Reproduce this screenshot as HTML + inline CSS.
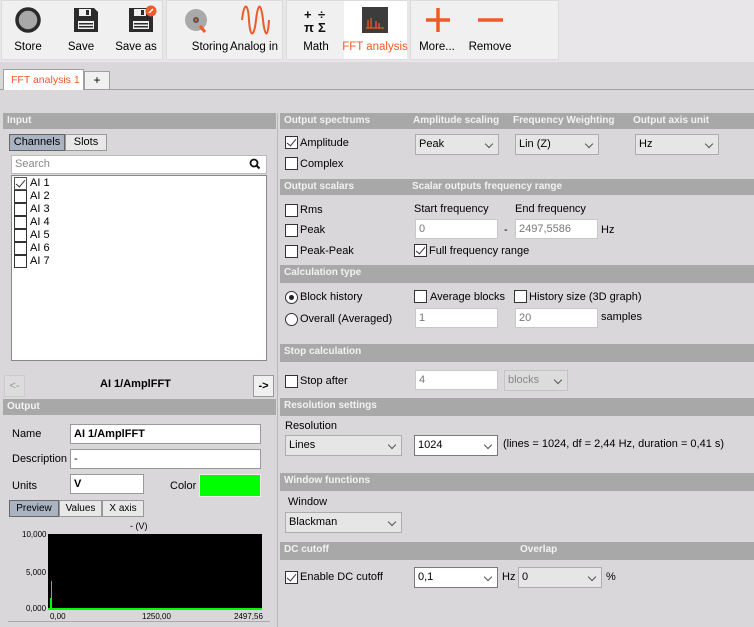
<!DOCTYPE html>
<html><head><meta charset="utf-8"><style>
*{box-sizing:border-box;margin:0;padding:0}
body{width:754px;height:627px;overflow:hidden;background:#d9d7da;font-family:"Liberation Sans",sans-serif;font-size:11px;color:#000;position:relative}
.a{position:absolute}
.grp{position:absolute;top:0;height:60px;background:#f0f0f0;border:1px solid #dcdcdc}
.tb{position:absolute;top:41px;font-size:11.5px;text-align:center;width:70px}
.hd{position:absolute;background:#a8a8a8;color:#f2f2f2;font-weight:bold;font-size:10px;height:16px;line-height:16px;padding-left:4px}
.hd span{position:absolute;top:0}
.cb{position:absolute;width:13px;height:13px;border:1px solid #333;background:#fff}
.cb.c::after{content:"";position:absolute;left:3px;top:0px;width:4px;height:8px;border:solid #333;border-width:0 1.5px 1.5px 0;transform:rotate(40deg)}
.in{position:absolute;background:#fff;border:1px solid #c8c8c8;height:20px;line-height:18px;padding-left:3px;color:#777}
.sel{position:absolute;border:1px solid #adadad;background:#e6e6e6;height:21px;line-height:19px;padding-left:3px}
.sel.w{background:#fff;border-color:#7a7a7a}
.sel::after{content:"";position:absolute;right:6px;top:6px;width:5px;height:5px;border:solid #555;border-width:0 1px 1px 0;transform:rotate(45deg)}
.t{position:absolute;white-space:nowrap}
.rd{position:absolute;width:13px;height:13px;border:1px solid #333;border-radius:50%;background:#fff}
.btn{position:absolute;border:1px solid #999;background:#e8e8e8;height:17px;line-height:15px;text-align:center}
</style></head><body>
<div class="a" style="left:0;top:0;width:754px;height:62px;background:#e8e6e9"></div>
<div class="grp" style="left:1px;width:162px"></div>
<div class="grp" style="left:166px;width:117px"></div>
<div class="grp" style="left:286px;width:121px"></div>
<div class="grp" style="left:410px;width:149px"></div>
<div class="a" style="left:344px;top:1px;width:63px;height:58px;background:#fff"></div>
<svg class="a" style="left:0;top:0" width="560" height="36">
<circle cx="28" cy="20" r="11" fill="#a8a8a8" stroke="#2b2b2b" stroke-width="3.5"/>
<path d="M74 8h20l4 4v20h-24z" fill="#2b2b2b"/><rect x="79" y="9" width="12" height="7" fill="#f0f0f0"/><rect x="86" y="10" width="3" height="5" fill="#2b2b2b"/><rect x="78" y="21" width="16" height="8" fill="#f0f0f0"/><rect x="79" y="23" width="14" height="1.5" fill="#2b2b2b"/><rect x="79" y="26" width="14" height="1.5" fill="#2b2b2b"/>
<g transform="translate(55,0)"><path d="M74 8h20l4 4v20h-24z" fill="#2b2b2b"/><rect x="79" y="9" width="12" height="7" fill="#f0f0f0"/><rect x="86" y="10" width="3" height="5" fill="#2b2b2b"/><rect x="78" y="21" width="16" height="8" fill="#f0f0f0"/><rect x="79" y="23" width="14" height="1.5" fill="#2b2b2b"/><rect x="79" y="26" width="14" height="1.5" fill="#2b2b2b"/><circle cx="96" cy="11" r="5.5" fill="#f05a28"/><path d="M94 13l4-4" stroke="#fff" stroke-width="1.5"/></g>
<circle cx="196" cy="20" r="11" fill="#a9a9a9"/><circle cx="196" cy="20" r="3" fill="#555"/><circle cx="196" cy="20" r="1.2" fill="#f05a28"/><path d="M200 26l5 6" stroke="#f05a28" stroke-width="3"/>
<path d="M242 20c2-18 6-18 7 0s5 18 7 0 5-18 7 0 5 18 6 0" fill="none" stroke="#f05a28" stroke-width="2"/>
<g fill="#111" font-family="Liberation Sans" font-weight="bold" font-size="13"><text x="304" y="19">+</text><text x="318" y="19">÷</text><text x="304" y="32">π</text><text x="318" y="32">Σ</text></g>
<rect x="362" y="7" width="26" height="26" fill="#3c3c3c"/><path d="M366 28h18M368 28v-8M371 28v-10M376 28v-7M379 28v-5" stroke="#f05a28" stroke-width="1.3"/>
<path d="M438 8v24M426 20h24" stroke="#f05a28" stroke-width="3.5"/>
<path d="M478 20h25" stroke="#f05a28" stroke-width="3.5"/>
</svg>
<div class="tb" style="left:-7px">Store</div>
<div class="tb" style="left:46px">Save</div>
<div class="tb" style="left:101px">Save as</div>
<div class="tb" style="left:175px">Storing</div>
<div class="tb" style="left:219px">Analog in</div>
<div class="tb" style="left:281px">Math</div>
<div class="tb" style="left:340px;color:#f05a28">FFT analysis</div>
<div class="tb" style="left:402px">More...</div>
<div class="tb" style="left:455px">Remove</div>
<div class="a" style="left:0;top:89px;width:754px;height:1px;background:#a0a0a0"></div>
<div class="a" style="left:3px;top:69px;width:81px;height:21px;background:#fff;border:1px solid #a0a0a0;border-bottom:none;color:#f05a28;padding:4px 0 0 7px;font-size:10.5px;white-space:nowrap">FFT analysis 1</div>
<div class="a" style="left:84px;top:71px;width:26px;height:19px;background:#f0f0f0;border:1px solid #a0a0a0;text-align:center;line-height:17px;font-size:12px">+</div>
<div class="hd" style="left:3px;top:113px;width:273px">Input</div>
<div class="a" style="left:277px;top:113px;width:1px;height:514px;background:#b8b8b8"></div>
<div class="btn" style="left:9px;top:134px;width:56px;background:#a9b3c2;border-color:#666">Channels</div>
<div class="btn" style="left:65px;top:134px;width:42px">Slots</div>
<div class="a" style="left:11px;top:155px;width:256px;height:19px;background:#fff;border:1px solid #bbb;color:#888;padding:2px 3px">Search</div>
<svg class="a" style="left:249px;top:158px" width="12" height="12"><circle cx="5" cy="5" r="3.5" fill="none" stroke="#111" stroke-width="1.8"/><path d="M7.5 7.5l3 3" stroke="#111" stroke-width="2"/></svg>
<div class="a" style="left:11px;top:175px;width:256px;height:186px;background:#fff;border:1px solid #888"></div>
<div class="cb c" style="left:14px;top:177px;border-color:#555"></div><div class="t" style="left:30px;top:177px">AI 1</div>
<div class="cb" style="left:14px;top:190px"></div><div class="t" style="left:30px;top:190px">AI 2</div>
<div class="cb" style="left:14px;top:203px"></div><div class="t" style="left:30px;top:203px">AI 3</div>
<div class="cb" style="left:14px;top:216px"></div><div class="t" style="left:30px;top:216px">AI 4</div>
<div class="cb" style="left:14px;top:229px"></div><div class="t" style="left:30px;top:229px">AI 5</div>
<div class="cb" style="left:14px;top:242px"></div><div class="t" style="left:30px;top:242px">AI 6</div>
<div class="cb" style="left:14px;top:255px"></div><div class="t" style="left:30px;top:255px">AI 7</div>
<div class="btn" style="left:4px;top:375px;width:21px;height:22px;line-height:20px;color:#999;border-color:#ccc;background:#dcdcdc">&lt;-</div>
<div class="t" style="left:100px;top:378px;font-weight:bold">AI 1/AmplFFT</div>
<div class="btn" style="left:253px;top:375px;width:21px;height:22px;line-height:20px;background:#f0f0f0;font-weight:bold">-&gt;</div>
<div class="hd" style="left:3px;top:399px;width:273px">Output</div>
<div class="t" style="left:12px;top:428px">Name</div>
<div class="in" style="left:70px;top:424px;width:191px;color:#000;font-weight:bold;border-color:#999">AI 1/AmplFFT</div>
<div class="t" style="left:12px;top:453px">Description</div>
<div class="in" style="left:70px;top:449px;width:191px;color:#000;border-color:#999">-</div>
<div class="t" style="left:12px;top:480px">Units</div>
<div class="in" style="left:70px;top:474px;width:74px;color:#000;font-weight:bold;border-color:#999">V</div>
<div class="t" style="left:170px;top:480px">Color</div>
<div class="a" style="left:199px;top:474px;width:62px;height:23px;background:#00ff00;border:1px solid #eee"></div>
<div class="btn" style="left:9px;top:500px;width:50px;background:#a9b3c2;border-color:#666;font-size:10px">Preview</div>
<div class="btn" style="left:59px;top:500px;width:43px;font-size:10px">Values</div>
<div class="btn" style="left:102px;top:500px;width:42px;font-size:10px">X axis</div>
<div class="t" style="left:130px;top:521px;font-size:9px">- (V)</div>
<div class="a" style="left:48px;top:534px;width:214px;height:76px;background:#000;border-bottom:2px solid #0f0"></div>
<div class="a" style="left:51px;top:581px;width:1px;height:28px;background:#0f0"></div>
<div class="a" style="left:50px;top:598px;width:1px;height:11px;background:#0f0"></div>
<div class="t" style="left:22px;top:530px;font-size:8px">10,000</div>
<div class="t" style="left:26px;top:568px;font-size:8px">5,000</div>
<div class="t" style="left:26px;top:604px;font-size:8px">0,000</div>
<div class="t" style="left:50px;top:612px;font-size:8px">0,00</div>
<div class="t" style="left:142px;top:612px;font-size:8px">1250,00</div>
<div class="t" style="left:234px;top:612px;font-size:8px">2497,56</div>
<div class="a" style="left:8px;top:621px;width:262px;height:1px;background:#aaa"></div>
<div class="hd" style="left:280px;top:113px;width:474px"><span style="left:4px">Output spectrums</span><span style="left:133px">Amplitude scaling</span><span style="left:233px">Frequency Weighting</span><span style="left:353px">Output axis unit</span></div>
<div class="cb c" style="left:285px;top:136px"></div><div class="t" style="left:300px;top:137px">Amplitude</div>
<div class="cb" style="left:285px;top:157px"></div><div class="t" style="left:300px;top:158px">Complex</div>
<div class="sel" style="left:415px;top:134px;width:84px">Peak</div>
<div class="sel" style="left:515px;top:134px;width:84px">Lin (Z)</div>
<div class="sel" style="left:635px;top:134px;width:84px">Hz</div>
<div class="hd" style="left:280px;top:179px;width:474px"><span style="left:4px">Output scalars</span><span style="left:132px">Scalar outputs frequency range</span></div>
<div class="cb" style="left:285px;top:204px"></div><div class="t" style="left:300px;top:204px">Rms</div>
<div class="cb" style="left:285px;top:224px"></div><div class="t" style="left:300px;top:224px">Peak</div>
<div class="cb" style="left:285px;top:245px"></div><div class="t" style="left:300px;top:245px">Peak-Peak</div>
<div class="t" style="left:414px;top:203px">Start frequency</div>
<div class="t" style="left:515px;top:203px">End frequency</div>
<div class="in" style="left:415px;top:219px;width:83px">0</div>
<div class="t" style="left:504px;top:224px">-</div>
<div class="in" style="left:515px;top:219px;width:83px">2497,5586</div>
<div class="t" style="left:601px;top:224px">Hz</div>
<div class="cb c" style="left:414px;top:244px"></div><div class="t" style="left:429px;top:245px">Full frequency range</div>
<div class="hd" style="left:280px;top:265px;width:474px;height:18px">Calculation type</div>
<div class="rd" style="left:285px;top:291px"><div class="a" style="left:3px;top:3px;width:5px;height:5px;border-radius:50%;background:#222"></div></div><div class="t" style="left:300px;top:291px">Block history</div>
<div class="rd" style="left:285px;top:313px"></div><div class="t" style="left:300px;top:313px">Overall (Averaged)</div>
<div class="cb" style="left:414px;top:290px"></div><div class="t" style="left:430px;top:291px">Average blocks</div>
<div class="cb" style="left:514px;top:290px"></div><div class="t" style="left:529px;top:291px">History size (3D graph)</div>
<div class="in" style="left:415px;top:308px;width:83px">1</div>
<div class="in" style="left:515px;top:308px;width:83px">20</div>
<div class="t" style="left:601px;top:311px">samples</div>
<div class="hd" style="left:280px;top:344px;width:474px;height:18px">Stop calculation</div>
<div class="cb" style="left:285px;top:375px"></div><div class="t" style="left:300px;top:375px">Stop after</div>
<div class="in" style="left:415px;top:370px;width:83px">4</div>
<div class="sel" style="left:504px;top:370px;width:64px;color:#888;background:#dcdcdc;border-color:#c4c4c4">blocks</div>
<div class="hd" style="left:280px;top:398px;width:474px;height:18px">Resolution settings</div>
<div class="t" style="left:285px;top:420px">Resolution</div>
<div class="sel" style="left:285px;top:435px;width:117px">Lines</div>
<div class="sel w" style="left:414px;top:435px;width:84px">1024</div>
<div class="t" style="left:503px;top:438px">(lines = 1024, df = 2,44 Hz, duration = 0,41 s)</div>
<div class="hd" style="left:280px;top:473px;width:474px;height:18px">Window functions</div>
<div class="t" style="left:288px;top:496px">Window</div>
<div class="sel" style="left:285px;top:512px;width:117px">Blackman</div>
<div class="hd" style="left:280px;top:542px;width:474px;height:18px"><span style="left:4px">DC cutoff</span><span style="left:240px">Overlap</span></div>
<div class="cb c" style="left:285px;top:571px"></div><div class="t" style="left:300px;top:571px">Enable DC cutoff</div>
<div class="sel w" style="left:414px;top:567px;width:84px">0,1</div>
<div class="t" style="left:502px;top:571px">Hz</div>
<div class="sel" style="left:518px;top:567px;width:84px">0</div>
<div class="t" style="left:606px;top:571px">%</div>
</body></html>
